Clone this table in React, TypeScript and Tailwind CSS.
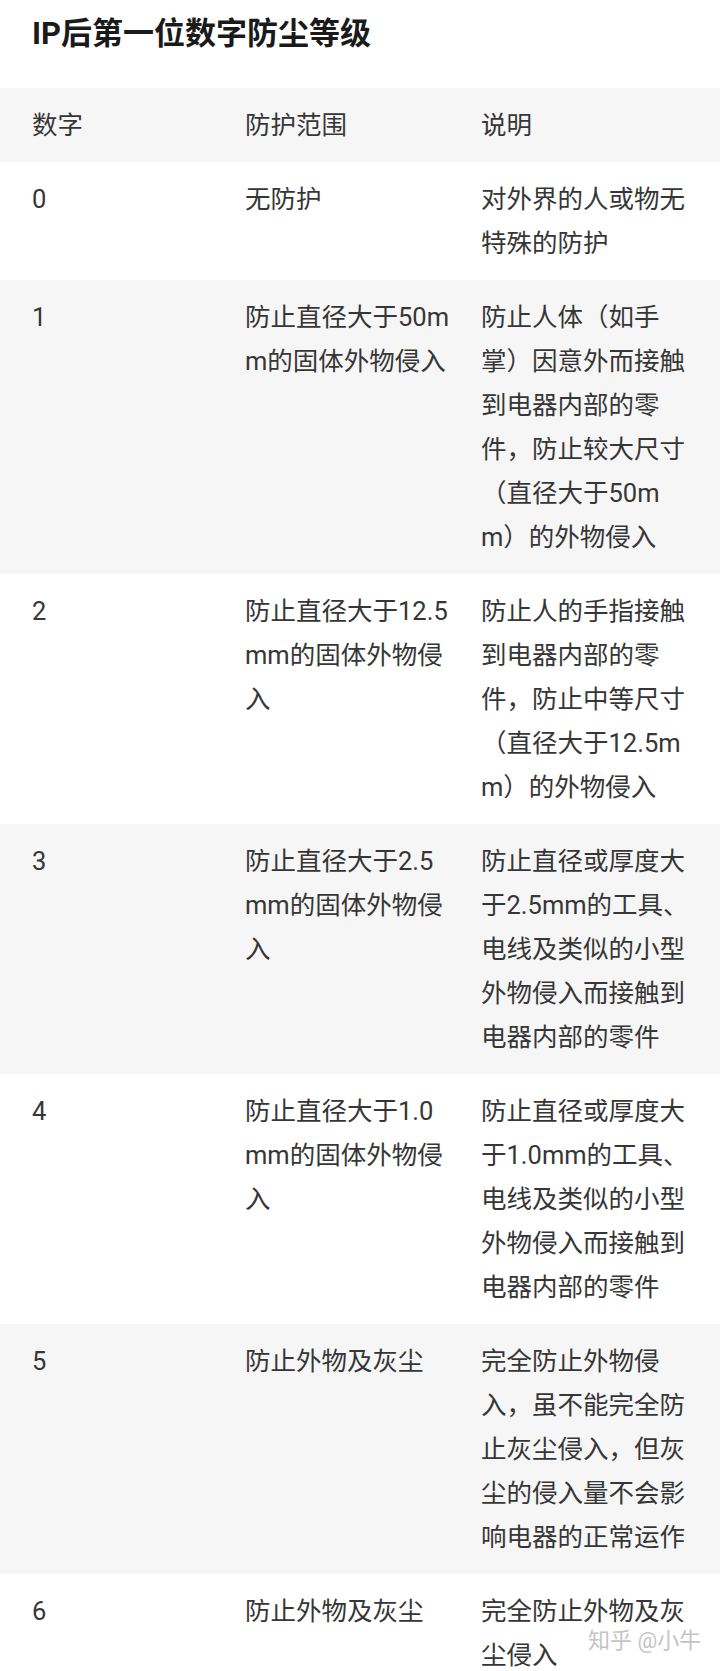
const rows = [
  { n: "0", range: "无防护", desc: "对外界的人或物无特殊的防护" },
  { n: "1", range: "防止直径大于50mm的固体外物侵入", desc: "防止人体（如手掌）因意外而接触到电器内部的零件，防止较大尺寸（直径大于50mm）的外物侵入" },
  { n: "2", range: "防止直径大于12.5mm的固体外物侵入", desc: "防止人的手指接触到电器内部的零件，防止中等尺寸（直径大于12.5mm）的外物侵入" },
  { n: "3", range: "防止直径大于2.5mm的固体外物侵入", desc: "防止直径或厚度大于2.5mm的工具、电线及类似的小型外物侵入而接触到电器内部的零件" },
  { n: "4", range: "防止直径大于1.0mm的固体外物侵入", desc: "防止直径或厚度大于1.0mm的工具、电线及类似的小型外物侵入而接触到电器内部的零件" },
  { n: "5", range: "防止外物及灰尘", desc: "完全防止外物侵入，虽不能完全防止灰尘侵入，但灰尘的侵入量不会影响电器的正常运作" },
  { n: "6", range: "防止外物及灰尘", desc: "完全防止外物及灰尘侵入" },
];

function Row({ n, range, desc, gray }: { n: string; range: string; desc: string; gray: boolean }) {
  return (
    <div className={`flex pl-8 py-[15px] leading-[44px] ${gray ? "bg-[#f6f6f6]" : "bg-white"}`}>
      <div className="w-[213px] shrink-0">{n}</div>
      <div className="w-[208px] shrink-0 mr-[28px] break-all">{range}</div>
      <div className="w-[214px] shrink-0 break-all">{desc}</div>
    </div>
  );
}

export default function App() {
  return (
    <div
      className="relative w-[720px] bg-white text-[#363636] text-[25.5px] [text-spacing-trim:space-all]"
      style={{ fontFamily: 'Roboto, "Noto Sans CJK SC", sans-serif' }}
    >
      <h1 className="pl-8 pt-[14px] pb-[34px] text-[31px] leading-[40px] font-bold text-[#1a1a1a]">
        IP后第一位数字防尘等级
      </h1>
      <div>
        <Row n="数字" range="防护范围" desc="说明" gray={true} />
        {rows.map((r, i) => (
          <Row key={r.n} n={r.n} range={r.range} desc={r.desc} gray={i % 2 === 1} />
        ))}
      </div>
      <div className="absolute left-[588px] top-[1628px] text-[22px] leading-[26px] text-[#c4c4c4]">
        知乎 @小牛
      </div>
    </div>
  );
}
